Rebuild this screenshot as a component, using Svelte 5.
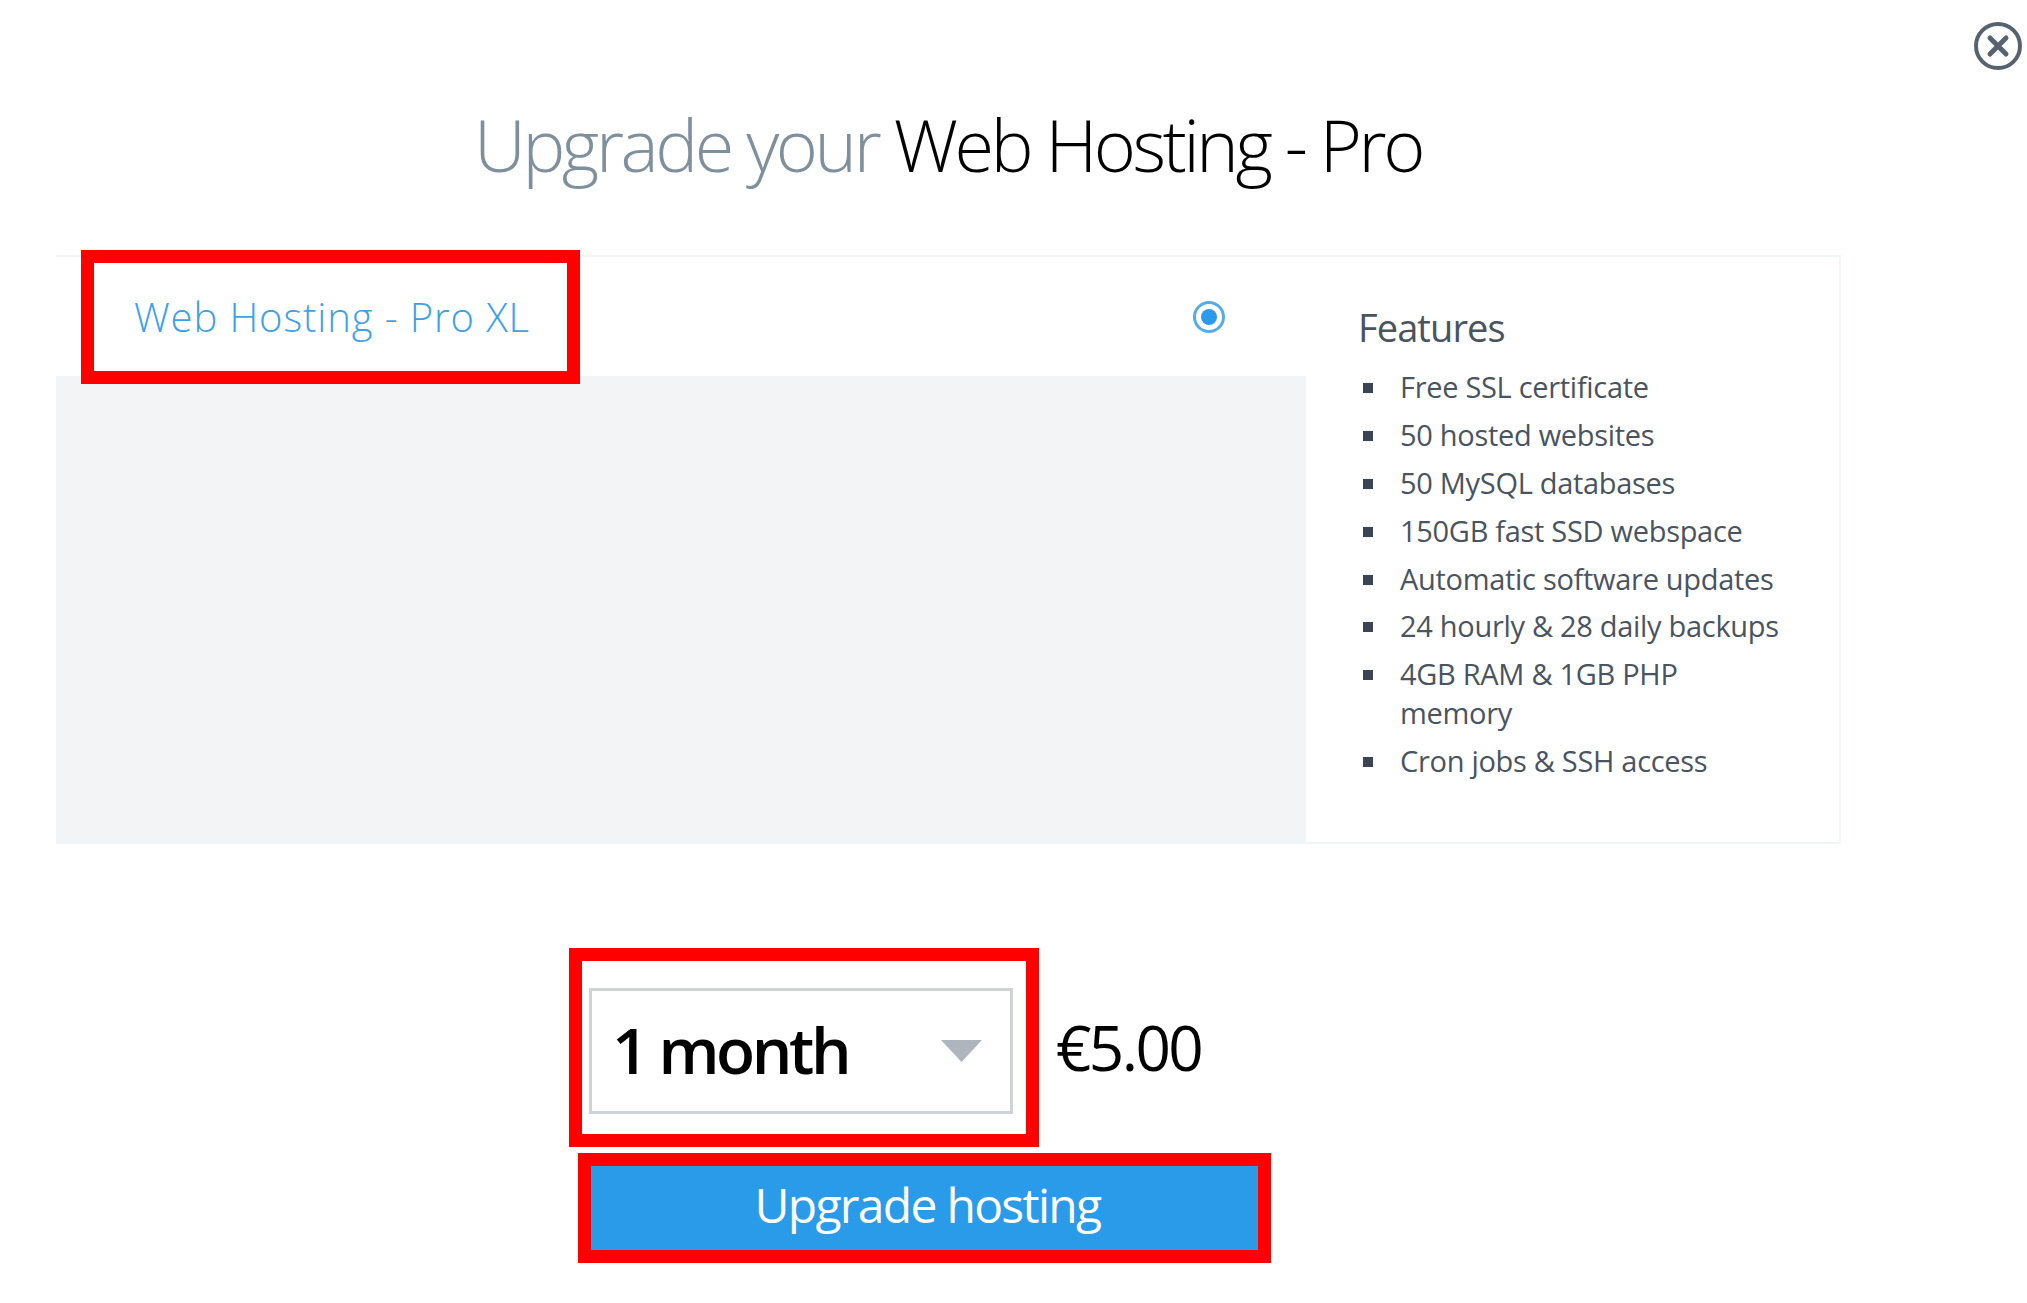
<script lang="ts">
  const features = [
    'Free SSL certificate',
    '50 hosted websites',
    '50 MySQL databases',
    '150GB fast SSD webspace',
    'Automatic software updates',
    '24 hourly & 28 daily backups',
    '4GB RAM & 1GB PHP memory',
    'Cron jobs & SSH access'
  ]
</script>

<div class="modal">
  <button class="close" aria-label="Close">
    <svg viewBox="0 0 48 48" width="48" height="48" fill="none" stroke="currentColor" stroke-width="4" aria-hidden="true">
      <circle cx="24" cy="24" r="22" />
      <path d="M16 16l16 16M32 16L16 32" stroke-width="5" stroke-linecap="round" />
    </svg>
  </button>

  <h1 class="title"><span class="muted">Upgrade your</span> Web Hosting - Pro</h1>

  <section class="card">
    <div class="plans">
      <div class="plan">
        <span class="plan-name">Web Hosting - Pro XL</span>
        <span class="radio"></span>
      </div>
      <div class="plan-rest"></div>
    </div>
    <aside class="features">
      <h2>Features</h2>
      <ul>
        {#each features as f}
          <li>{f}</li>
        {/each}
      </ul>
    </aside>
  </section>

  <div class="buy">
    <div class="period-shell">
      <select class="period">
        <option>1 month</option>
      </select>
      <svg class="chevron" viewBox="0 0 41 22" width="41" height="22" aria-hidden="true">
        <path d="M0 0h41L20.5 22z" fill="currentColor" />
      </svg>
    </div>
    <span class="price">€5.00</span>
  </div>
  <button class="upgrade">Upgrade hosting</button>

  <i class="mark mark-plan"></i>
  <i class="mark mark-period"></i>
  <i class="mark mark-upgrade"></i>
</div>

<style>
  :global(body) {
    margin: 0;
    background: #fff;
  }

  .modal {
    position: relative;
    box-sizing: border-box;
    width: 2027px;
    height: 1303px;
    padding-top: 94px;
    overflow: hidden;
    font-family: "Open Sans", sans-serif;
    color: #000;
  }

  .close {
    position: absolute;
    top: 22px;
    right: 5px;
    padding: 0;
    border: 0;
    background: none;
    color: #56636f;
    line-height: 0;
  }

  .title {
    margin: 0 0 0 54px;
    width: 1788px;
    height: 161px;
    font-size: 72px;
    font-weight: 350;
    line-height: 100px;
    letter-spacing: -3.4px;
    text-align: center;
  }
  .muted { color: #7e8f9e; }

  .card {
    display: flex;
    box-sizing: border-box;
    width: 1785px;
    height: 589px;
    margin-left: 56px;
    border: 2px solid #f3f4f6;
    border-left: 0;
  }

  .plans {
    display: flex;
    flex-direction: column;
    width: 1250px;
  }
  .plan {
    display: flex;
    align-items: center;
    justify-content: space-between;
    height: 119px;
    padding: 0 81px 0 78px;
    box-sizing: border-box;
  }
  .plan-name {
    font-size: 40px;
    font-weight: 350;
    letter-spacing: 0.9px;
    color: #3da1ea;
  }
  .radio {
    display: flex;
    align-items: center;
    justify-content: center;
    box-sizing: border-box;
    width: 32px;
    height: 32px;
    border: 3px solid #52ade9;
    border-radius: 50%;
  }
  .radio::before {
    content: "";
    width: 16px;
    height: 16px;
    border-radius: 50%;
    background: #2b9be9;
  }
  .plan-rest {
    flex: 1;
    background: #f3f4f6;
  }

  .features {
    flex: 1;
    padding: 44px 50px 0 52px;
    color: #4a5460;
  }
  .features h2 {
    margin: 0 0 14px;
    font-size: 38px;
    font-weight: 400;
    line-height: 52px;
    letter-spacing: -0.9px;
  }
  .features ul {
    margin: 0;
    padding: 0;
    list-style: none;
  }
  .features li {
    position: relative;
    margin-bottom: 8.9px;
    padding-left: 42px;
    font-size: 29px;
    line-height: 39px;
    letter-spacing: -0.3px;
  }
  .features li::before {
    content: "";
    position: absolute;
    left: 5px;
    top: 16px;
    width: 10px;
    height: 10px;
    background: #3b4450;
  }

  .buy {
    display: flex;
    align-items: center;
    gap: 43px;
    margin: 144px 0 51px 589px;
  }
  .period-shell {
    position: relative;
    display: flex;
    align-items: center;
  }
  .period {
    appearance: none;
    -webkit-appearance: none;
    box-sizing: border-box;
    width: 424px;
    height: 126px;
    padding: 0 0 4px 20px;
    border: 3px solid #d0d3d6;
    border-radius: 0;
    background: #fff;
    color: #000;
    font-family: inherit;
    font-size: 64px;
    font-weight: 600;
    letter-spacing: -3.4px;
  }
  .chevron {
    position: absolute;
    right: 31px;
    color: #aeb5bd;
    pointer-events: none;
  }
  .price {
    font-size: 62px;
    letter-spacing: -2.6px;
    margin-top: -9px;
  }

  .upgrade {
    display: block;
    width: 669px;
    height: 86px;
    margin-left: 590px;
    padding: 0 0 8px 6px;
    border: 0;
    background: #299be9;
    color: #fff;
    font-family: inherit;
    font-size: 48px;
    letter-spacing: -1.7px;
  }

  .mark {
    position: absolute;
    box-sizing: border-box;
    border: 13px solid #f00;
    pointer-events: none;
  }
  .mark-plan { left: 81px; top: 250px; width: 499px; height: 134px; }
  .mark-period { left: 569px; top: 948px; width: 470px; height: 199px; }
  .mark-upgrade { left: 578px; top: 1153px; width: 693px; height: 110px; }
</style>
